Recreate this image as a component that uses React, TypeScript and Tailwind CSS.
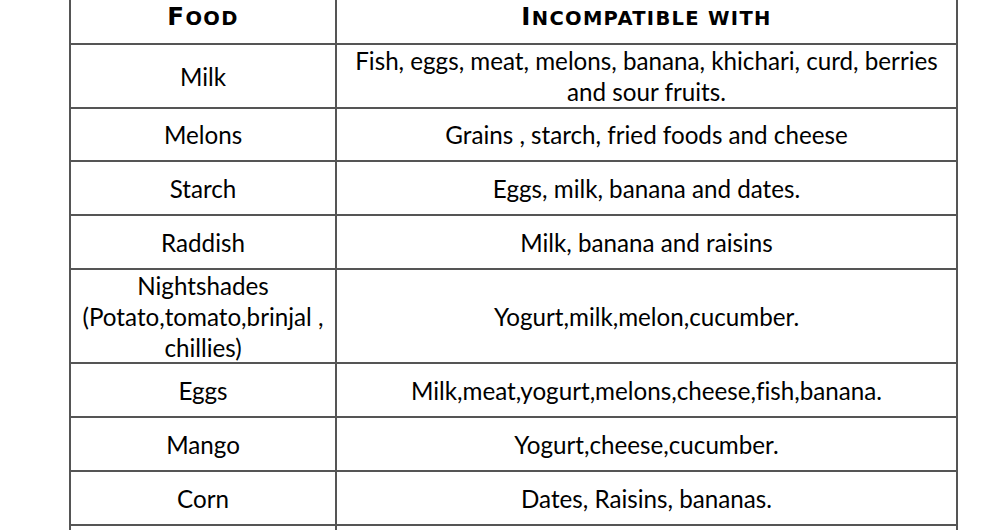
const rows: { food: string[]; h: string; with: string[] }[] = [
  { food: ["Milk"], h: "h-[64px]", with: ["Fish, eggs, meat, melons, banana, khichari, curd, berries", "and sour fruits."] },
  { food: ["Melons"], h: "h-[53px]", with: ["Grains , starch, fried foods and cheese"] },
  { food: ["Starch"], h: "h-[54px]", with: ["Eggs, milk, banana and dates."] },
  { food: ["Raddish"], h: "h-[54px]", with: ["Milk, banana and raisins"] },
  { food: ["Nightshades", "(Potato,tomato,brinjal ,", "chillies)"], h: "h-[94px]", with: ["Yogurt,milk,melon,cucumber."] },
  { food: ["Eggs"], h: "h-[54px]", with: ["Milk,meat,yogurt,melons,cheese,fish,banana."] },
  { food: ["Mango"], h: "h-[54px]", with: ["Yogurt,cheese,cucumber."] },
  { food: ["Corn"], h: "h-[54px]", with: ["Dates, Raisins, bananas."] },
];

function Cell({ lines, first }: { lines: string[]; first?: boolean }) {
  return (
    <div
      className={`flex flex-col items-center justify-center text-center ${
        first ? "border-r-2 border-[#555]" : ""
      }`}
    >
      {lines.map((l) => (
        <span key={l} className="leading-[31px] whitespace-nowrap">
          {l}
        </span>
      ))}
    </div>
  );
}

// small-caps heading, first letter full size
function Caps({ first, rest }: { first: string; rest: string }) {
  return (
    <span className="whitespace-nowrap tracking-[1.3px]">
      <span className="text-[24.5px]">{first}</span>
      <span className="text-[19.5px]">{rest}</span>
    </span>
  );
}

export default function App() {
  return (
    <div className="w-[1008px] h-[530px] overflow-hidden bg-white">
      <div className="ml-[69px] w-[889px] border-x-2 border-[#555] text-black text-[24.2px] font-['Lato',sans-serif] [font-variant-ligatures:none]">
        <div className="grid grid-cols-[266px_1fr] h-[45px] border-b-2 border-[#555] font-['DejaVu_Sans',sans-serif] font-bold">
          <div className="border-r-2 border-[#555] flex items-start justify-center pt-[1px] leading-[32px]">
            <Caps first="F" rest="OOD" />
          </div>
          <div className="flex items-start justify-center pt-[1px] leading-[32px]">
            <Caps first="I" rest="NCOMPATIBLE WITH" />
          </div>
        </div>
        {rows.map((r) => (
          <div key={r.food[0]} className={`grid grid-cols-[266px_1fr] ${r.h} border-b-2 border-[#555]`}>
            <Cell lines={r.food} first />
            <Cell lines={r.with} />
          </div>
        ))}
        <div className="grid grid-cols-[266px_1fr] h-[40px]">
          <div className="border-r-2 border-[#555]" />
          <div />
        </div>
      </div>
    </div>
  );
}
